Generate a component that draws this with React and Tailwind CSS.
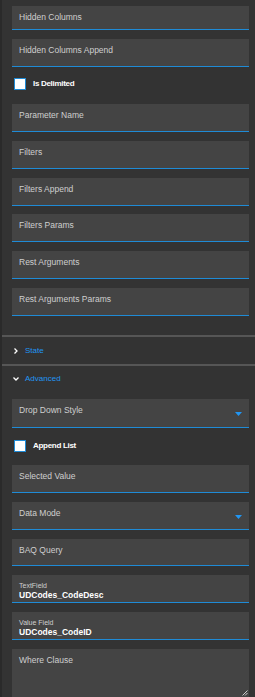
import { useState } from 'react';

const font = { fontFamily: '"Liberation Sans", Arial, sans-serif' };

function Field({ label, dropdown, className = 'h-[28px] mt-[9px]' }) {
  return (
    <div className={`${className} relative shrink-0 flex flex-col bg-[#444444]`}>
      <div className="flex-1 px-[7px] pt-[6px] text-[8.5px] leading-[10px] text-[#cfcfcf]">{label}</div>
      <div className="h-[1px] shrink-0 bg-[#1f8bd6]" />
      {dropdown && (
        <svg className="absolute right-[7px] top-[13px]" width="7" height="4" viewBox="0 0 7 4">
          <path d="M0 0 H7 L3.5 4 Z" fill="#2196f3" />
        </svg>
      )}
    </div>
  );
}

function ValueField({ label, value }) {
  return (
    <div className="h-[28px] mt-[9px] shrink-0 flex flex-col bg-[#444444]">
      <div className="flex-1 px-[7px] pt-[7px]">
        <div className="text-[7px] leading-[8px] text-[#cfcfcf]">{label}</div>
        <div className="text-[8.5px] leading-[10px] text-white font-bold">{value}</div>
      </div>
      <div className="h-[1px] shrink-0 bg-[#1f8bd6]" />
    </div>
  );
}

function Check({ label, top, bottom }) {
  const [on, setOn] = useState(false);
  return (
    <div className={`flex items-center gap-[7px] pl-[2px] shrink-0 ${top} ${bottom}`}>
      <button
        onClick={() => setOn(!on)}
        className="w-[12px] h-[12px] shrink-0 bg-white border border-[#1f8bd6]"
      />
      <span className="text-[8px] leading-[12px] font-bold text-white tracking-[-0.3px]">{label}</span>
    </div>
  );
}

export default function App() {
  return (
    <div style={font} className="w-[255px] h-[697px] overflow-hidden flex items-start bg-[#2a2a2a]">
      {/* left strip */}
      <div className="w-[2px] shrink-0" />

      <div className="flex-1 min-h-[697px] bg-[#333333]">
        <div className="flex flex-col pl-[10px] pr-[6px] pt-[6px]">
          <Field label="Hidden Columns" className="h-[24px]" />
          <Field label="Hidden Columns Append" />
          <Check label="Is Delimited" top="pt-[11px]" bottom="pb-[14px]" />
          <Field label="Parameter Name" className="h-[28px]" />
          <Field label="Filters" />
          <Field label="Filters Append" />
          <Field label="Filters Params" className="h-[28px] mt-[8px]" />
          <Field label="Rest Arguments" />
          <Field label="Rest Arguments Params" />
        </div>

        {/* State section */}
        <div className="mt-[19px] h-[2px] bg-[#565656]" />
        <div className="h-[27px] flex items-center gap-[7px] pl-[12px] text-[8px] text-[#2196f3]">
          <svg width="4" height="6" viewBox="0 0 4 6">
            <path d="M0.5 0.5 L3 3 L0.5 5.5" stroke="#fff" strokeWidth="1.3" fill="none" />
          </svg>
          State
        </div>
        <div className="h-[2px] bg-[#565656]" />

        {/* Advanced section */}
        <div className="h-[26px] flex items-center gap-[6px] pl-[11px] text-[8px] text-[#2196f3]">
          <svg width="6" height="4" viewBox="0 0 6 4">
            <path d="M0.5 0.5 L3 3 L5.5 0.5" stroke="#fff" strokeWidth="1.3" fill="none" />
          </svg>
          Advanced
        </div>

        <div className="flex flex-col pl-[10px] pr-[6px] pt-[7px]">
          <Field label="Drop Down Style" dropdown className="h-[29px]" />
          <Check label="Append List" top="pt-[12px]" bottom="pb-[13px]" />
          <Field label="Selected Value" className="h-[28px]" />
          <Field label="Data Mode" dropdown />
          <Field label="BAQ Query" className="h-[27px] mt-[9px]" />
          <ValueField label="TextField" value="UDCodes_CodeDesc" />
          <ValueField label="Value Field" value="UDCodes_CodeID" />
          <div className="relative h-[60px] mt-[9px] shrink-0 bg-[#444444] px-[7px] pt-[6px] text-[8.5px] leading-[10px] text-[#cfcfcf]">
            Where Clause
            <svg className="absolute right-[1px] top-[41px]" width="6" height="6" viewBox="0 0 6 6">
              <path d="M0.5 5.5 L5.5 0.5 M3 5.5 L5.5 3" stroke="#dddddd" strokeWidth="0.9" />
            </svg>
          </div>
        </div>
      </div>
    </div>
  );
}
